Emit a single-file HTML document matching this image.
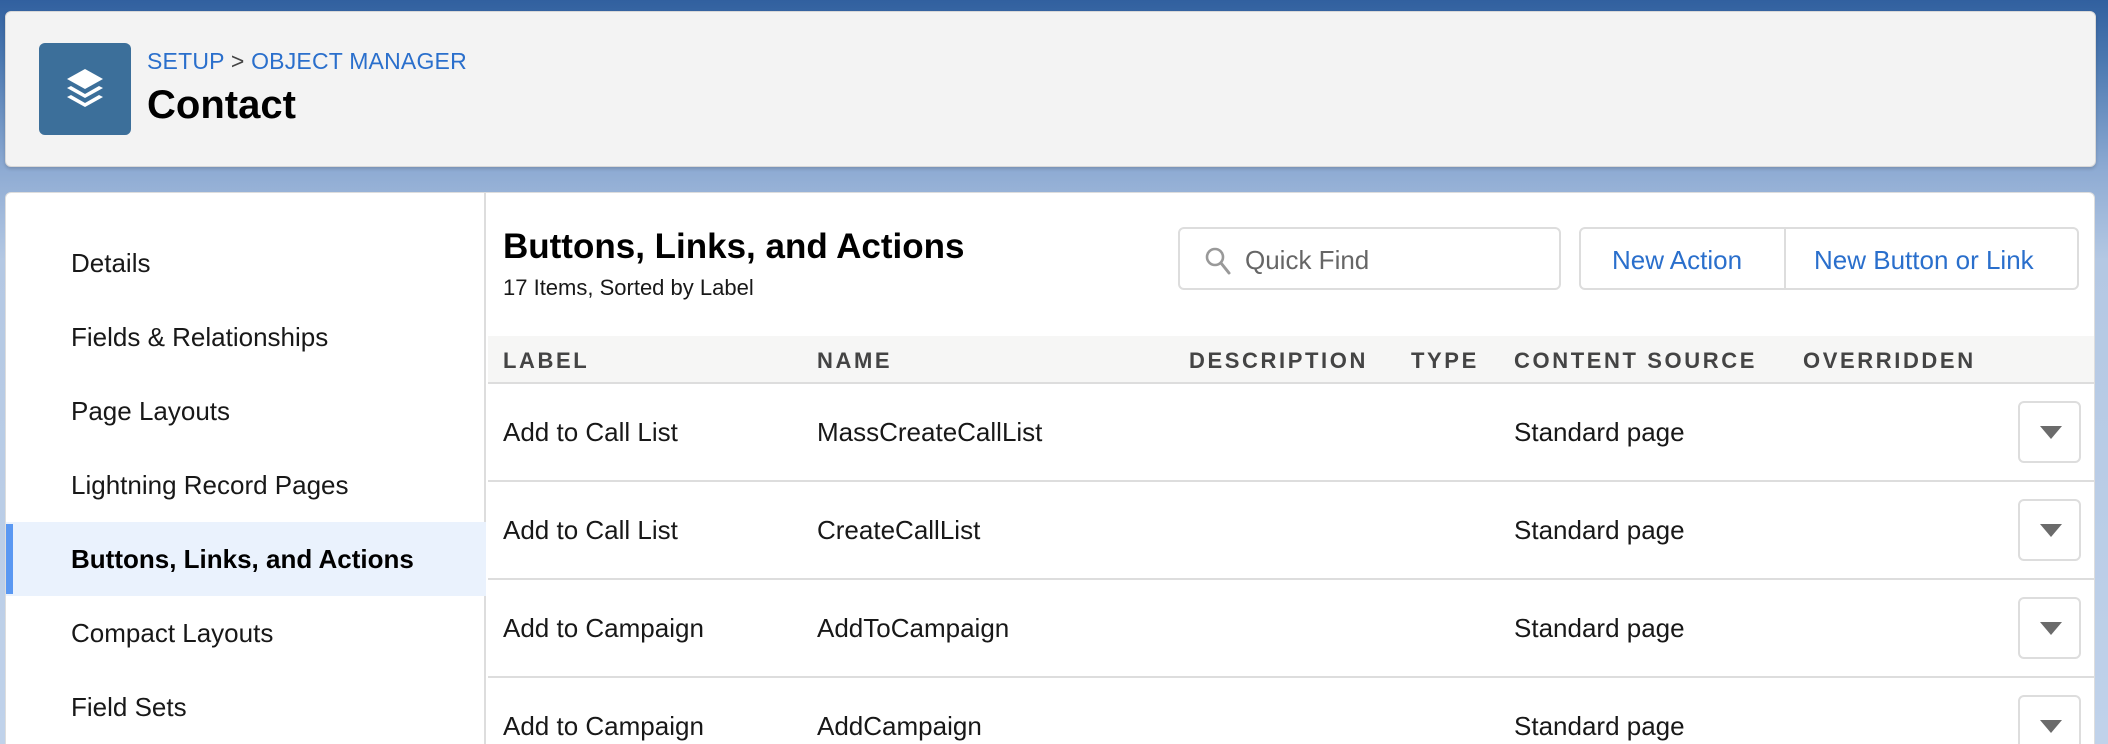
<!DOCTYPE html>
<html style="width:2108px;height:744px;overflow:hidden"><head><meta charset="utf-8"><style>
*{box-sizing:border-box;margin:0;padding:0}
body{width:2108px;height:744px;overflow:hidden;font-family:"Liberation Sans",sans-serif;background:linear-gradient(180deg,#31609f 0px,#4b78b0 60px,#8eabd3 170px,#b4c8e3 260px,#c0d2ea 744px);position:relative;color:#181818}
.hdr{position:absolute;left:5px;top:11px;width:2091px;height:156px;background:#f3f3f3;border:1px solid #d8d8d8;border-radius:6px;box-shadow:0 2px 3px rgba(0,0,0,.15)}
.ico{position:absolute;left:33px;top:31px;width:92px;height:92px;background:#3c6f9a;border-radius:6px}
.ico svg{position:absolute;left:24px;top:22px}
.bc{position:absolute;left:141px;top:36px;font-size:23px;color:#2a6fcc;letter-spacing:.2px}
.bc span{color:#444}
.ttl{position:absolute;left:141px;top:71px;font-size:40px;font-weight:bold;color:#000}
.main{position:absolute;left:5px;top:192px;width:2090px;height:552px;background:#fff;border:1px solid #ddd;border-bottom:none;border-radius:6px 6px 0 0;overflow:hidden}
.side{position:absolute;left:0;top:0;width:480px;height:552px;border-right:2px solid #ddd}
.nav{position:absolute;left:65px;font-size:26px;color:#181818}
.act{position:absolute;left:0;top:329px;width:480px;height:74px;background:#eaf2fd}
.act:before{content:"";position:absolute;left:0;top:2px;width:7px;height:70px;background:#5a98f2}
.rt{position:absolute;left:482px;top:0;right:0;height:552px}
.h2{position:absolute;left:15px;top:34px;font-size:35px;font-weight:bold;color:#000}
.sub{position:absolute;left:15px;top:82px;font-size:22px;color:#181818}
.qf{position:absolute;left:690px;top:34px;width:383px;height:63px;border:2px solid #ddd;border-radius:6px;font-size:26px;color:#666;padding:16px 0 0 65px}
.qf svg{position:absolute;left:24px;top:17px}
.btns{position:absolute;left:1091px;top:34px;width:500px;height:63px;border:2px solid #ddd;border-radius:6px;font-size:26px;color:#2a6fcc}
.btns div{position:absolute;top:16px}
.btns .sep{position:absolute;left:203px;top:0;width:2px;height:59px;background:#ddd}
.th{position:absolute;left:0;right:0;top:143px;height:48px;background:#f6f6f5;border-bottom:2px solid #ddd}
.th div{position:absolute;top:12px;font-size:22px;font-weight:bold;color:#444;letter-spacing:2.6px}
.row{position:absolute;left:0;right:0;height:98px;border-bottom:2px solid #ddd;font-size:26px}
.row div{position:absolute;top:33px}
.dd{position:absolute;left:1530px;top:17px!important;width:63px;height:62px;border:2px solid #ddd;border-radius:6px}
.dd:after{content:"";position:absolute;left:20px;top:23px;border-left:11px solid transparent;border-right:11px solid transparent;border-top:13px solid #6b6b6b}
</style></head><body>
<div class="hdr">
<div class="ico"><svg width="44" height="48" viewBox="0 0 44 48"><path d="M22 4L40 14L22 24L4 14Z" fill="#fff"/><path d="M4 23L8 21L22 29L36 21L40 23L22 33Z" fill="#fff"/><path d="M4 32L8 30L22 38L36 30L40 32L22 42Z" fill="#fff"/></svg></div>
<div class="bc">SETUP <span>&gt;</span> OBJECT MANAGER</div>
<div class="ttl">Contact</div>
</div>
<div class="main">
<div class="side">
<div class="act"></div>
<div class="nav" style="top:55px">Details</div>
<div class="nav" style="top:129px">Fields &amp; Relationships</div>
<div class="nav" style="top:203px">Page Layouts</div>
<div class="nav" style="top:277px">Lightning Record Pages</div>
<div class="nav" style="top:351px;font-weight:bold;color:#000">Buttons, Links, and Actions</div>
<div class="nav" style="top:425px">Compact Layouts</div>
<div class="nav" style="top:499px">Field Sets</div>
</div>
<div class="rt">
<div class="h2">Buttons, Links, and Actions</div>
<div class="sub">17 Items, Sorted by Label</div>
<div class="qf"><svg width="28" height="30" viewBox="0 0 28 30"><circle cx="11" cy="11" r="8" fill="none" stroke="#999" stroke-width="2.6"/><path d="M17 17L25 27" stroke="#999" stroke-width="3" stroke-linecap="round"/></svg>Quick Find</div>
<div class="btns"><div style="left:31px">New Action</div><span class="sep"></span><div style="left:233px">New Button or Link</div></div>
<div class="th"><div style="left:15px">LABEL</div><div style="left:329px">NAME</div><div style="left:701px">DESCRIPTION</div><div style="left:923px">TYPE</div><div style="left:1026px">CONTENT SOURCE</div><div style="left:1315px">OVERRIDDEN</div></div>
<div class="row" style="top:191px"><div style="left:15px">Add to Call List</div><div style="left:329px">MassCreateCallList</div><div style="left:1026px">Standard page</div><span class="dd"></span></div>
<div class="row" style="top:289px"><div style="left:15px">Add to Call List</div><div style="left:329px">CreateCallList</div><div style="left:1026px">Standard page</div><span class="dd"></span></div>
<div class="row" style="top:387px"><div style="left:15px">Add to Campaign</div><div style="left:329px">AddToCampaign</div><div style="left:1026px">Standard page</div><span class="dd"></span></div>
<div class="row" style="top:485px"><div style="left:15px">Add to Campaign</div><div style="left:329px">AddCampaign</div><div style="left:1026px">Standard page</div><span class="dd"></span></div>
</div>
</div>
</body></html>
